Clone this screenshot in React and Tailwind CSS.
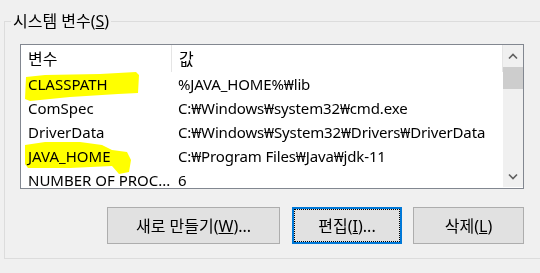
import React from "react";

const rows = [
  ["CLASSPATH", "%JAVA_HOME%₩lib"],
  ["ComSpec", "C:₩Windows₩system32₩cmd.exe"],
  ["DriverData", "C:₩Windows₩System32₩Drivers₩DriverData"],
  ["JAVA_HOME", "C:₩Program Files₩Java₩jdk-11"],
  ["NUMBER OF PROC...", "6"],
];

function Chevron({ down }) {
  return (
    <svg width="10" height="7" viewBox="0 0 10 7">
      <path
        d={down ? "M1 1.5 L5 5.5 L9 1.5" : "M1 5.5 L5 1.5 L9 5.5"}
        fill="none"
        stroke="#606060"
        strokeWidth="1.6"
      />
    </svg>
  );
}

export default function App() {
  return (
    <div className="relative w-[540px] h-[273px] overflow-hidden bg-[#f0f0f0] pt-[11px] pl-[4px] text-[15px] text-black font-['Noto_Sans','Noto_Sans_CJK_KR',sans-serif]">
      <fieldset className="w-[560px] h-[248px] border border-[#dcdcdc] pl-[6px]">
        <legend className="px-[2px] leading-[20px] text-[16px]">
          시스템 변수(<span className="underline">S</span>)
        </legend>
        <div className="ml-[9px] mt-[13px] w-[504px] h-[145px] border border-[#828790] bg-white flex">
          <div className="flex-1 flex flex-col overflow-hidden">
            <div className="flex h-[27px] shrink-0 text-[16px]">
              <div className="w-[150px] pl-[7px] flex items-center">변수</div>
              <div className="w-px bg-[#e5e5e5]" />
              <div className="flex-1 pl-[7px] flex items-center">값</div>
              <div className="w-px bg-[#e5e5e5]" />
            </div>
            {rows.map(([k, v]) => (
              <div key={k} className="flex h-[24px] shrink-0 items-center leading-[24px]">
                <div className="w-[151px] pl-[7px] pr-[2px] whitespace-nowrap overflow-hidden">{k}</div>
                <div className="flex-1 pl-[6px] whitespace-nowrap overflow-hidden tracking-[-0.15px]">{v}</div>
              </div>
            ))}
          </div>
          <div className="w-[20px] h-[142px] bg-[#f0f0f0] flex flex-col">
            <div className="h-[22px] flex items-center justify-center">
              <Chevron />
            </div>
            <div className="h-[22px] bg-[#cdcdcd]" />
            <div className="flex-1" />
            <div className="h-[21px] flex items-center justify-center">
              <Chevron down />
            </div>
          </div>
        </div>
        <div className="ml-[9px] mt-[18px] w-[504px] flex justify-end text-[16px]">
          <button className="w-[173px] h-[37px] mr-[12px] border border-[#adadad] bg-[#e1e1e1] flex items-center justify-center">
            새로 만들기(<span className="underline">W</span>)...
          </button>
          <button className="w-[110px] h-[37px] mr-[11px] border-2 border-[#0078d7] bg-[#e1e1e1] flex">
            <span className="flex-1 border border-dotted border-black flex items-center justify-center">
              편집(<span className="underline">I</span>)...
            </span>
          </button>
          <button className="w-[111px] h-[37px] border border-[#adadad] bg-[#e1e1e1] flex items-center justify-center">
            삭제(<span className="underline">L</span>)
          </button>
        </div>
      </fieldset>
      <svg
        className="absolute left-0 top-0 pointer-events-none mix-blend-multiply"
        width="540"
        height="273"
        viewBox="0 0 540 273"
      >
        <path
          d="M26 77 L45 75 L100 74 L136 72 L139 75 L138 93 L118 94 L70 97 L30 101 L25 99 Z"
          fill="#ffff00"
        />
        <path
          d="M25 145 L45 142 L80 142 L102 145 L112 150 L127 152 L131 160 L129 172 L119 174 L112 166 L70 168 L28 168 L25 164 Z"
          fill="#ffff00"
        />
      </svg>
    </div>
  );
}
